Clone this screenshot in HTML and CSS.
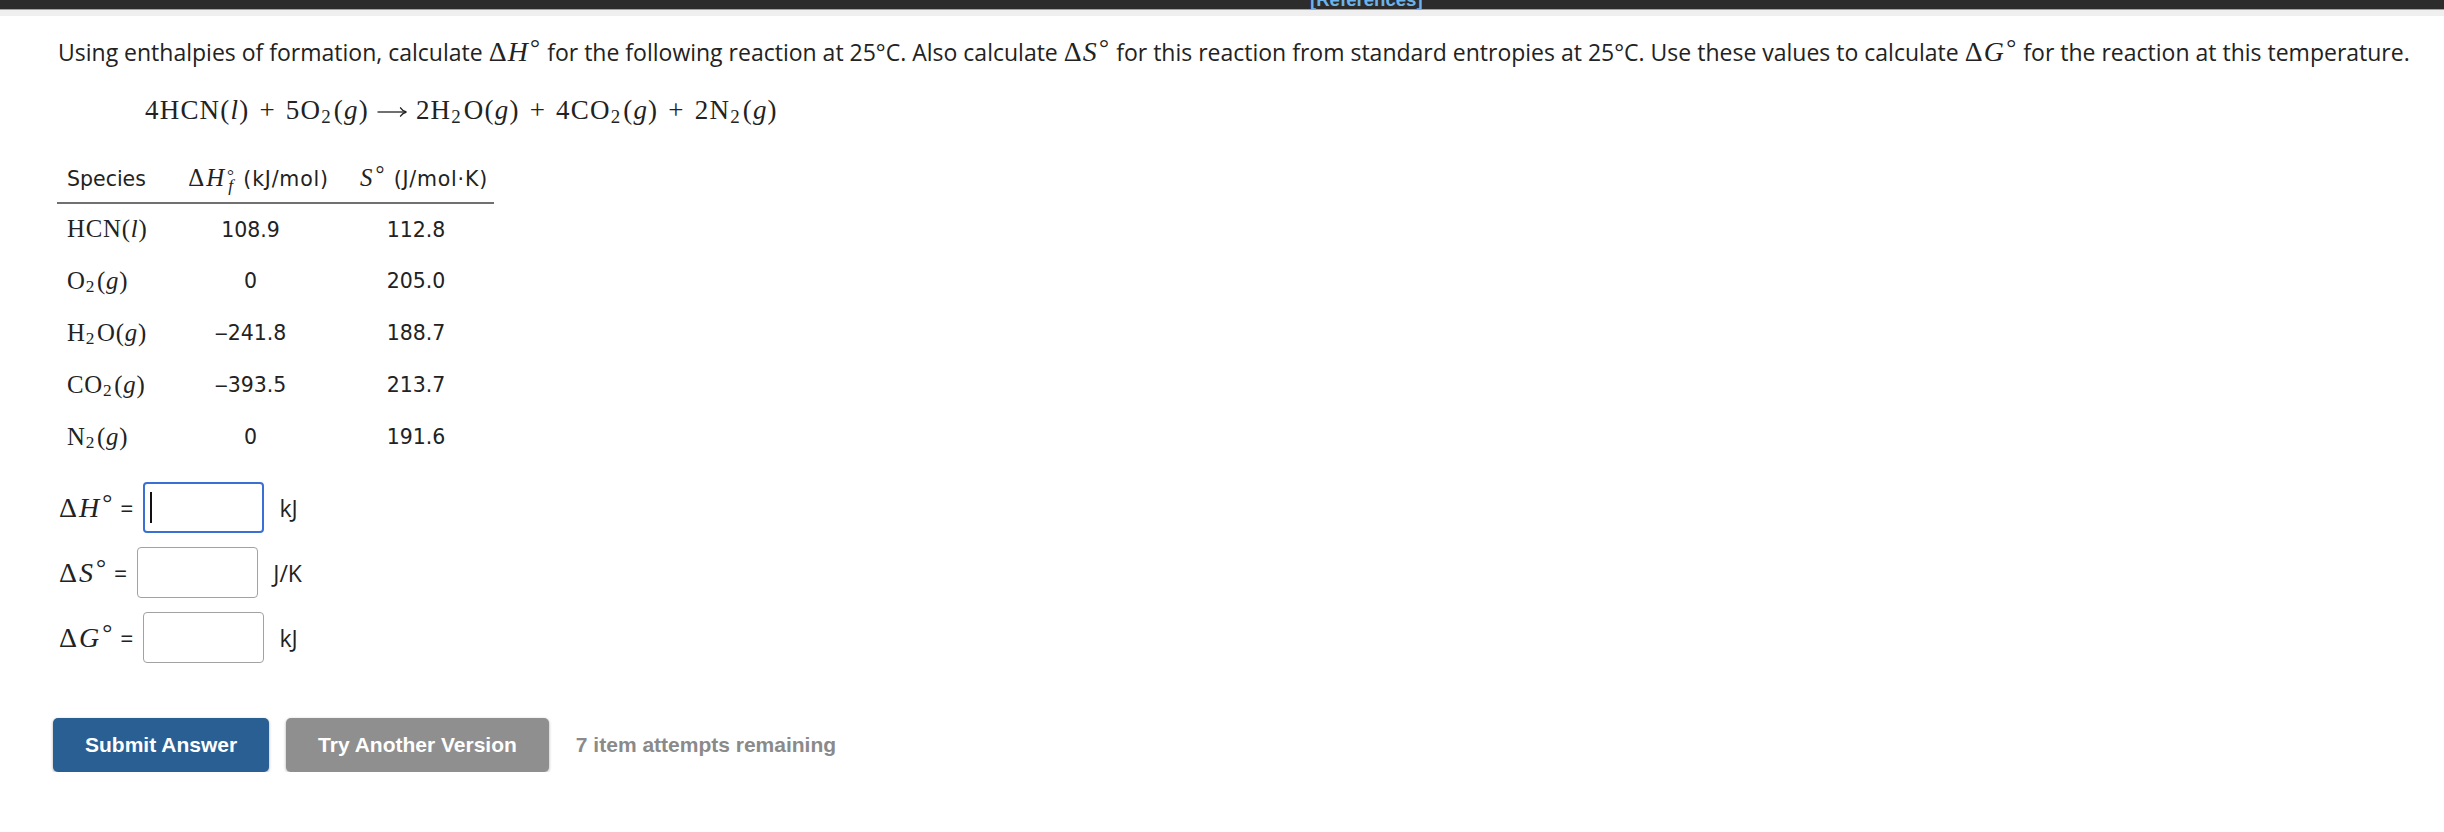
FILE: index.html
```html
<!DOCTYPE html>
<html>
<head>
<meta charset="utf-8">
<link rel="stylesheet" href="styles.css">
</head>
<body>
<div class="topbar"><span class="refs">[References]</span></div>
<div class="topline"></div>
<div class="stripe"></div>
<div class="content">
  <p class="prompt">Using enthalpies of formation, calculate <span class="m">Δ<i>H</i><sup class="deg">°</sup></span> for the following reaction at 25°C. Also calculate <span class="m">Δ<i>S</i><sup class="deg">°</sup></span> for this reaction from standard entropies at 25°C. Use these values to calculate <span class="m">Δ<i>G</i><sup class="deg">°</sup></span> for the reaction at this temperature.</p>

  <div class="eq"><span>4HCN(<i>l</i>)</span><span class="op">+</span><span>5O<sub>2</sub>(<i>g</i>)</span><svg class="arrow" viewBox="0 0 30 12" width="30" height="12" aria-label="→"><path d="M0.5 6 H29" fill="none" stroke="#222" stroke-width="1.3"/><path d="M23.5 1.8 Q25.5 5 29.4 6 Q25.5 7 23.5 10.2" fill="none" stroke="#222" stroke-width="1.3" stroke-linecap="round"/></svg><span>2H<sub>2</sub>O(<i>g</i>)</span><span class="op">+</span><span>4CO<sub>2</sub>(<i>g</i>)</span><span class="op">+</span><span>2N<sub>2</sub>(<i>g</i>)</span></div>

  <table class="data">
    <colgroup><col class="c1"><col class="c2"><col class="c3"></colgroup>
    <thead>
      <tr>
        <th class="left">Species</th>
        <th class="hd"><span class="tm">Δ<i>H</i><span class="supsub"><span class="ss-sup">°</span><span class="ss-sub"><i>f</i></span></span></span> (kJ/mol)</th>
        <th class="hd"><span class="tm"><i>S</i><sup class="deg">°</sup></span> (J/mol·K)</th>
      </tr>
    </thead>
    <tbody>
      <tr><td class="left"><span class="tm">HCN(<i>l</i>)</span></td><td>108.9</td><td>112.8</td></tr>
      <tr><td class="left"><span class="tm">O<sub>2</sub>(<i>g</i>)</span></td><td>0</td><td>205.0</td></tr>
      <tr><td class="left"><span class="tm">H<sub>2</sub>O(<i>g</i>)</span></td><td>‒241.8</td><td>188.7</td></tr>
      <tr><td class="left"><span class="tm">CO<sub>2</sub>(<i>g</i>)</span></td><td>‒393.5</td><td>213.7</td></tr>
      <tr><td class="left"><span class="tm">N<sub>2</sub>(<i>g</i>)</span></td><td>0</td><td>191.6</td></tr>
    </tbody>
  </table>

  <div class="form">
    <div class="frow">
      <span class="lbl">Δ<i>H</i><sup class="deg">°</sup></span><span class="eqs">=</span>
      <span class="inwrap"><input class="box focus" type="text"><span class="caret"></span></span>
      <span class="unit">kJ</span>
    </div>
    <div class="frow">
      <span class="lbl">Δ<i>S</i><sup class="deg">°</sup></span><span class="eqs">=</span>
      <span class="inwrap"><input class="box" type="text"></span>
      <span class="unit">J/K</span>
    </div>
    <div class="frow">
      <span class="lbl">Δ<i>G</i><sup class="deg">°</sup></span><span class="eqs">=</span>
      <span class="inwrap"><input class="box" type="text"></span>
      <span class="unit">kJ</span>
    </div>
  </div>

  <div class="actions">
    <button class="btn primary" type="button">Submit Answer</button>
    <button class="btn secondary" type="button">Try Another Version</button>
    <span class="attempts">7 item attempts remaining</span>
  </div>
</div>
</body>
</html>
```

FILE: styles.css
```css
* { box-sizing: border-box; }

body {
  margin: 0;
  background: #ffffff;
  font-family: "Open Sans", "Liberation Sans", sans-serif;
  color: #222222;
}

.topbar {
  height: 9px;
  background: #2c2c2c;
  overflow: hidden;
  display: flex;
}

.refs {
  margin-left: 1310px;
  margin-top: -9px;
  font-family: "Liberation Sans", Arial, sans-serif;
  font-weight: bold;
  font-size: 18.6px;
  line-height: 18px;
  color: #6db3ea;
  white-space: nowrap;
}

.topline {
  height: 1px;
  background: #a3a3a3;
}

.stripe {
  height: 6px;
  background: #efefef;
}

.content {
  padding-left: 58px;
}

.prompt {
  margin: 20px 0 0 0;
  font-size: 23px;
  line-height: 33px;
  white-space: nowrap;
}

.m {
  font-family: "Liberation Serif", serif;
  font-size: 1.21em;
  line-height: 1;
  letter-spacing: 1.2px;
}

.deg {
  font-size: 0.9em;
  line-height: 0;
  vertical-align: 0.2em;
  margin-left: 1px;
}

.eq {
  margin-top: 21px;
  padding-left: 87px;
  font-family: "Liberation Serif", serif;
  font-size: 27px;
  line-height: 40px;
  letter-spacing: 1.2px;
  white-space: nowrap;
}

.eq sub, .tm sub {
  font-size: 0.7em;
  line-height: 0;
  vertical-align: -0.22em;
  margin-right: 0.1em;
}

.op {
  margin: 0 10px;
}

.arrow {
  margin: 0 9px 0 8px;
  vertical-align: 1px;
}

.data {
  border-collapse: collapse;
  table-layout: fixed;
  width: 437px;
  margin: 25px 0 0 -1px;
  font-family: "DejaVu Sans", Verdana, sans-serif;
  font-size: 20.5px;
  color: #222222;
}

.c1 { width: 106px; }
.c2 { width: 175px; }
.c3 { width: 156px; }

.data th {
  height: 48px;
  padding: 0 4px;
  font-weight: normal;
  border-bottom: 2px solid #707070;
  vertical-align: middle;
  line-height: 28px;
  white-space: nowrap;
  text-align: center;
  letter-spacing: 0.8px;
}

.data th.hd {
  padding: 0 0 0 16px;
}

.data th .tm {
  letter-spacing: 2px;
}

.data th.left {
  padding-left: 10px;
  letter-spacing: 0;
}

.data td {
  height: 52px;
  padding: 0 10px;
  line-height: 28px;
  vertical-align: middle;
  text-align: center;
  white-space: nowrap;
}

.data .left {
  text-align: left;
}

.tm {
  font-family: "Liberation Serif", serif;
  font-size: 1.21em;
  letter-spacing: 0.8px;
}

.supsub {
  display: inline-flex;
  flex-direction: column;
  font-size: 0.7em;
  vertical-align: 5px;
  margin-left: 1px;
}

.ss-sup, .ss-sub {
  line-height: 10px;
}

.form {
  margin-top: 19px;
}

.frow {
  display: flex;
  align-items: center;
  height: 51px;
  margin-bottom: 14px;
  font-size: 23px;
}

.lbl {
  font-family: "Liberation Serif", serif;
  font-size: 28px;
  letter-spacing: 2px;
  margin-left: 1px;
}

.eqs {
  margin: 0 10px 0 6px;
}

.inwrap {
  position: relative;
  display: flex;
}

.box {
  width: 121px;
  height: 51px;
  margin: 0;
  padding: 0;
  border: 1px solid #a2a2a2;
  border-radius: 4px;
  background: #ffffff;
  font: inherit;
  outline: none;
}

.box.focus {
  border: 2px solid #3a6fd4;
}

.caret {
  position: absolute;
  left: 7px;
  top: 10px;
  width: 2px;
  height: 31px;
  background: #111111;
}

.unit {
  margin-left: 15px;
}

.actions {
  display: flex;
  align-items: center;
  gap: 17px;
  margin-top: 55px;
  margin-left: -5px;
}

.btn {
  height: 54px;
  padding: 0 32px;
  border: none;
  border-radius: 5px;
  font-family: "Liberation Sans", Arial, sans-serif;
  font-weight: bold;
  font-size: 21px;
  color: #ffffff;
  box-shadow: 0 1px 3px rgba(0, 0, 0, 0.35);
}

.primary {
  background: #2a5f93;
}

.secondary {
  background: #8f8f8f;
}

.attempts {
  margin-left: 10px;
  font-family: "Liberation Sans", Arial, sans-serif;
  font-weight: bold;
  font-size: 21px;
  color: #8a8a8a;
}
```
